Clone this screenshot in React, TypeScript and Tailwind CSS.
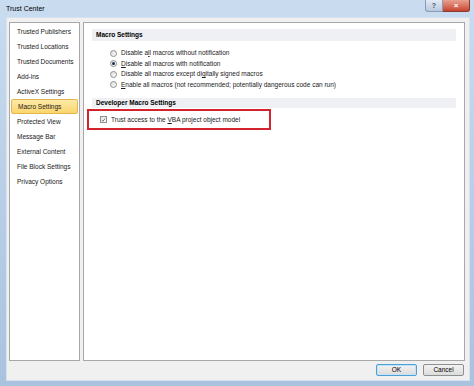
import React from 'react';

const navItems = [
  'Trusted Publishers',
  'Trusted Locations',
  'Trusted Documents',
  'Add-ins',
  'ActiveX Settings',
  'Macro Settings',
  'Protected View',
  'Message Bar',
  'External Content',
  'File Block Settings',
  'Privacy Options',
];

const Radio = ({ checked }: { checked?: boolean }) => (
  <span className="w-[7px] h-[7px] rounded-full border border-[#8e8f8f] bg-gradient-to-br from-[#dcdcdc] to-[#fbfbfb] flex items-center justify-center shrink-0">
    {checked && <span className="w-[3px] h-[3px] rounded-full bg-[#1b2f5a]" />}
  </span>
);

const App: React.FC = () => {
  const radios: React.ReactNode[] = [
    <>Disable a<u>l</u>l macros without notification</>,
    <><u>D</u>isable all macros with notification</>,
    <>Disable all macros except di<u>g</u>itally signed macros</>,
    <><u>E</u>nable all macros (not recommended; potentially dangerous code can run)</>,
  ];

  return (
    <div className="w-[474px] h-[386px] bg-gradient-to-b from-[#c9dcf0] to-[#a9c2de] flex flex-col font-['Liberation_Sans',Arial,sans-serif] text-[6.5px] text-[#1a1a1a] overflow-hidden">
      {/* Title bar */}
      <div className="h-[17px] flex items-start shrink-0">
        <span className="ml-[6px] mt-[5px] text-[7px] text-black leading-none">Trust Center</span>
        <div className="ml-auto flex mr-[4px]">
          <div className="w-[18px] h-[12px] rounded-bl-[3px] border border-t-0 border-[#8a9bb3] bg-gradient-to-b from-[#e3ebf5] to-[#b8c8dc] flex items-center justify-center text-[7px] text-[#4a5a72] font-bold leading-none">?</div>
          <div className="w-[27px] h-[12px] rounded-br-[3px] border border-t-0 border-l-0 border-[#8a3a30] bg-gradient-to-b from-[#e8a090] to-[#c7432e] flex items-center justify-center text-[8px] text-white font-bold leading-none">×</div>
        </div>
      </div>

      {/* Body */}
      <div className="flex-1 ml-[6px] mr-[4px] mb-[5px] bg-[#f0f0f0] border border-[#d8e2ee] flex flex-col">
        <div className="flex gap-[3px] pt-[4px] pl-[2px] h-[345px]">
          {/* Left nav */}
          <div className="w-[71px] h-[339px] bg-white border border-[#a8a8a8] pt-[1px] flex flex-col">
            {navItems.map(item => (
              <div
                key={item}
                className={`h-[15px] mx-[1px] flex items-center pl-[6px] ${item === 'Macro Settings' ? 'bg-gradient-to-b from-[#fdeaa8] to-[#fbd56b] border border-[#e3b54c] rounded-[2px] pl-[5px]' : ''}`}
              >
                {item}
              </div>
            ))}
          </div>

          {/* Right panel */}
          <div className="w-[382px] h-[339px] bg-white border border-[#a8a8a8] flex flex-col">
            <div className="mx-[8px] mt-[6px] h-[12px] bg-[#eef0f3] flex items-center pl-[4px] font-bold text-black">
              Macro Settings
            </div>
            <div className="flex flex-col pt-[7px] pl-[26px]">
              {radios.map((r, i) => (
                <div key={i} className="h-[10.5px] flex items-center gap-[4px]">
                  <Radio checked={i === 1} />
                  <span>{r}</span>
                </div>
              ))}
            </div>
            <div className="mx-[8px] mt-[8px] h-[10px] bg-[#eef0f3] flex items-center pl-[4px] font-bold text-black">
              Developer Macro Settings
            </div>
            <div className="ml-[3px] mt-[1px] w-[184px] h-[21px] border-2 border-[#d3232c] flex items-center pl-[11px] gap-[4px]">
              <span className="w-[7px] h-[7px] border border-[#8e8f8f] bg-gradient-to-br from-[#e4e4e4] to-white flex items-center justify-center shrink-0">
                <svg viewBox="0 0 8 8" className="w-[6px] h-[6px]">
                  <path d="M1.5 4.2 L3.2 6 L6.6 1.6" fill="none" stroke="#2a3f6a" strokeWidth="1.1" />
                </svg>
              </span>
              <span>Trust access to the <u>V</u>BA project object model</span>
            </div>
          </div>
        </div>

        {/* Buttons */}
        <div className="flex justify-end gap-[6px] pr-[5px] mt-[1px]">
          <button className="w-[41px] h-[12px] rounded-[2px] border border-[#4f9fd6] bg-gradient-to-b from-[#f2f2f2] to-[#dcdcdc] text-[6.5px] leading-none text-black shadow-[inset_0_0_0_1px_#bfe3f8]">
            OK
          </button>
          <button className="w-[41px] h-[12px] rounded-[2px] border border-[#8e8f8f] bg-gradient-to-b from-[#f2f2f2] to-[#dcdcdc] text-[6.5px] leading-none text-black">
            Cancel
          </button>
        </div>
      </div>
    </div>
  );
};

export default App;
